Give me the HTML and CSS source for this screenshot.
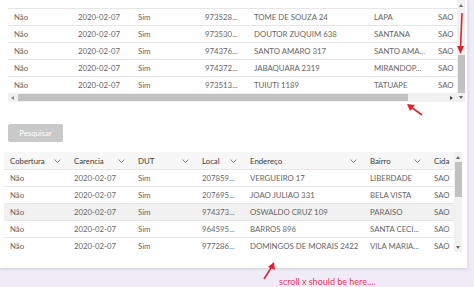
FILE: index.html
```html
<!DOCTYPE html>
<html lang="pt">
  <head>
    <meta charset="UTF-8" />
    <title>Pesquisa</title>
    <link rel="stylesheet" href="styles.css">
  </head>
  <body>
    <div class="panel">
      <div class="grid-top">
        <div class="viewport top-view">
          <table class="tbl tbl-top">
            <colgroup>
              <col style="width:64px"><col style="width:60px"><col style="width:67px"><col style="width:49px">
              <col style="width:120px"><col style="width:64px"><col style="width:60px">
            </colgroup>
            <tbody>
              <tr><td>Não</td><td>2020-02-07</td><td>Sim</td><td>973528...</td><td>TOME DE SOUZA 24</td><td>LAPA</td><td>SAO</td></tr>
              <tr><td>Não</td><td>2020-02-07</td><td>Sim</td><td>973530...</td><td>DOUTOR ZUQUIM 638</td><td>SANTANA</td><td>SAO</td></tr>
              <tr><td>Não</td><td>2020-02-07</td><td>Sim</td><td>974376...</td><td>SANTO AMARO 317</td><td>SANTO AMA...</td><td>SAO</td></tr>
              <tr><td>Não</td><td>2020-02-07</td><td>Sim</td><td>974372...</td><td>JABAQUARA 2319</td><td>MIRANDOP...</td><td>SAO</td></tr>
              <tr><td>Não</td><td>2020-02-07</td><td>Sim</td><td>973513...</td><td>TUIUTI 1189</td><td>TATUAPE</td><td>SAO</td></tr>
            </tbody>
          </table>
        </div>
        <div class="vbar vbar-top">
          <span class="arr arr-up"></span>
          <div class="thumb-v thumb-top"></div>
        </div>
        <div class="hbar">
          <span class="arr arr-left"></span>
          <div class="thumb-h"></div>
          <span class="arr arr-right"></span>
        </div>
        <div class="corner"><span class="arr arr-down"></span></div>
      </div>

      <button class="btn" disabled>Pesquisar</button>

      <div class="grid-bottom">
        <div class="viewport">
          <table class="tbl tbl-bottom">
            <colgroup>
              <col style="width:64px"><col style="width:64px"><col style="width:64px"><col style="width:48px">
              <col style="width:120px"><col style="width:64px"><col style="width:26px">
            </colgroup>
            <thead>
              <tr>
                <th><div class="th">Cobertura<svg class="chev" viewBox="0 0 7 4"><polyline points="0.5,0.5 3.5,3.5 6.5,0.5"/></svg></div></th>
                <th><div class="th">Carencia<svg class="chev" viewBox="0 0 7 4"><polyline points="0.5,0.5 3.5,3.5 6.5,0.5"/></svg></div></th>
                <th><div class="th">DUT<svg class="chev" viewBox="0 0 7 4"><polyline points="0.5,0.5 3.5,3.5 6.5,0.5"/></svg></div></th>
                <th><div class="th">Local<svg class="chev" viewBox="0 0 7 4"><polyline points="0.5,0.5 3.5,3.5 6.5,0.5"/></svg></div></th>
                <th><div class="th">Endereço<svg class="chev" viewBox="0 0 7 4"><polyline points="0.5,0.5 3.5,3.5 6.5,0.5"/></svg></div></th>
                <th><div class="th">Bairro<svg class="chev" viewBox="0 0 7 4"><polyline points="0.5,0.5 3.5,3.5 6.5,0.5"/></svg></div></th>
                <th>Cida</th>
              </tr>
            </thead>
            <tbody>
              <tr><td>Não</td><td>2020-02-07</td><td>Sim</td><td>207859...</td><td>VERGUEIRO 17</td><td>LIBERDADE</td><td>SAO</td></tr>
              <tr><td>Não</td><td>2020-02-07</td><td>Sim</td><td>207695...</td><td>JOAO JULIAO 331</td><td>BELA VISTA</td><td>SAO</td></tr>
              <tr class="hover"><td>Não</td><td>2020-02-07</td><td>Sim</td><td>974373...</td><td>OSWALDO CRUZ 109</td><td>PARAISO</td><td>SAO</td></tr>
              <tr><td>Não</td><td>2020-02-07</td><td>Sim</td><td>964595...</td><td>BARROS 896</td><td>SANTA CECI...</td><td>SAO</td></tr>
              <tr><td>Não</td><td>2020-02-07</td><td>Sim</td><td>977286...</td><td>DOMINGOS DE MORAIS 2422</td><td>VILA MARIA...</td><td>SAO</td></tr>
            </tbody>
          </table>
        </div>
        <div class="vbar vbar-bottom">
          <span class="arr arr-up"></span>
          <div class="thumb-v thumb-bottom"></div>
          <span class="arr arr-down"></span>
        </div>
      </div>
    </div>

    <!-- annotations drawn over the screenshot -->
    <svg class="marks" viewBox="0 0 474 287">
      <g stroke="#e0242e" stroke-width="1.6" fill="#e0242e">
        <line x1="462" y1="13" x2="460.5" y2="48"/>
        <polygon points="457,46 464,46 460.5,54" stroke="none"/>
        <line x1="422" y1="115" x2="411" y2="107"/>
        <polygon points="407,104 415,105 410,111" stroke="none"/>
        <line x1="264" y1="279" x2="271" y2="268"/>
        <polygon points="274,262 275,270 268,267" stroke="none"/>
      </g>
    </svg>
    <div class="note">scroll x should be here....</div>
  </body>
</html>
```

FILE: styles.css
```css
:root {
  --text: #666;
  --line: #e6e6e6;
  --track: #f1f1f1;
  --thumb: #c1c1c1;
}

body {
  margin: 0;
  font-family: "Lato", "Open Sans", sans-serif;
  font-size: 7.8px;
  color: var(--text);
  background-color: #efecf8;
  width: 474px;
  height: 287px;
  overflow: hidden;
  position: relative;
}

.panel {
  background-color: white;
  width: 467px;
  height: 268px;
  border-right: 1px solid #e4e4e4;
  box-shadow: 0 1px 3px rgba(0, 0, 0, 0.12);
  display: flex;
  flex-direction: column;
  align-items: flex-start;
}

.grid-top {
  display: grid;
  grid-template-columns: 449px 8px;
  grid-template-rows: 93px 9px;
  margin-left: 8px;
}

.grid-bottom {
  display: grid;
  grid-template-columns: 450px 8px;
  margin-left: 4px;
  margin-top: 10px;
}

.viewport {
  overflow: hidden;
}

.top-view {
  padding-top: 8px;
  box-sizing: border-box;
}

.tbl {
  table-layout: fixed;
  border-collapse: collapse;
  width: 484px;
}

.tbl-bottom {
  width: 450px;
}

.tbl td,
.tbl th {
  padding: 0 0 0 6px;
  height: 16px;
  white-space: nowrap;
  overflow: hidden;
  text-align: left;
}

.tbl td {
  border-top: 1px solid var(--line);
}

.tbl-bottom th {
  height: 17px;
  background-color: #f7f7f7;
  color: #3a3a3a;
  font-weight: normal;
  border-bottom: 1px solid var(--line);
  padding-left: 6px;
}

.tbl-bottom tbody tr:first-child td {
  border-top: none;
  height: 16px;
}

.tbl-bottom tr.hover td {
  background-color: #f1f1f1;
}

.th {
  display: flex;
  align-items: center;
  justify-content: space-between;
  padding-right: 7px;
}

.chev {
  width: 7px;
  height: 4px;
  fill: none;
  stroke: #777;
  stroke-width: 0.9;
}

.vbar {
  background-color: var(--track);
  display: flex;
  flex-direction: column;
  align-items: center;
}

.vbar-bottom {
  height: 100px;
}

.thumb-v {
  width: 7px;
  background-color: var(--thumb);
}

.thumb-top {
  margin-top: auto;
  height: 38px;
}

.thumb-bottom {
  margin-top: 3px;
  height: 35px;
  margin-bottom: auto;
}

.hbar {
  background-color: var(--track);
  display: flex;
  align-items: center;
}

.thumb-h {
  height: 7px;
  width: 390px;
  margin-left: 4px;
  background-color: var(--thumb);
}

.corner {
  background-color: var(--track);
  display: flex;
  align-items: center;
  justify-content: center;
}

.arr {
  width: 0;
  height: 0;
  border: 2px solid transparent;
}

.arr-up {
  border-bottom: 3px solid #666;
  border-top: none;
  margin-top: 4px;
}

.arr-down {
  border-top: 3px solid #666;
  border-bottom: none;
}

.vbar-bottom .arr-down {
  margin-bottom: 3px;
}

.arr-left {
  border-right: 3px solid #888;
  border-left: none;
  margin-left: 3px;
}

.arr-right {
  border-left: 3px solid #444;
  border-right: none;
  margin-left: auto;
  margin-right: 4px;
}

.btn {
  margin: 22px 0 0 8px;
  width: 55px;
  height: 18px;
  padding: 0;
  border: none;
  border-radius: 2px;
  background-color: #c9c9c9;
  color: white;
  font-family: inherit;
  font-size: 7.8px;
}

.marks {
  position: absolute;
  top: 0;
  left: 0;
  width: 474px;
  height: 287px;
  pointer-events: none;
}

.note {
  position: absolute;
  left: 279px;
  top: 276px;
  color: #e23658;
  font-size: 9px;
}
```
